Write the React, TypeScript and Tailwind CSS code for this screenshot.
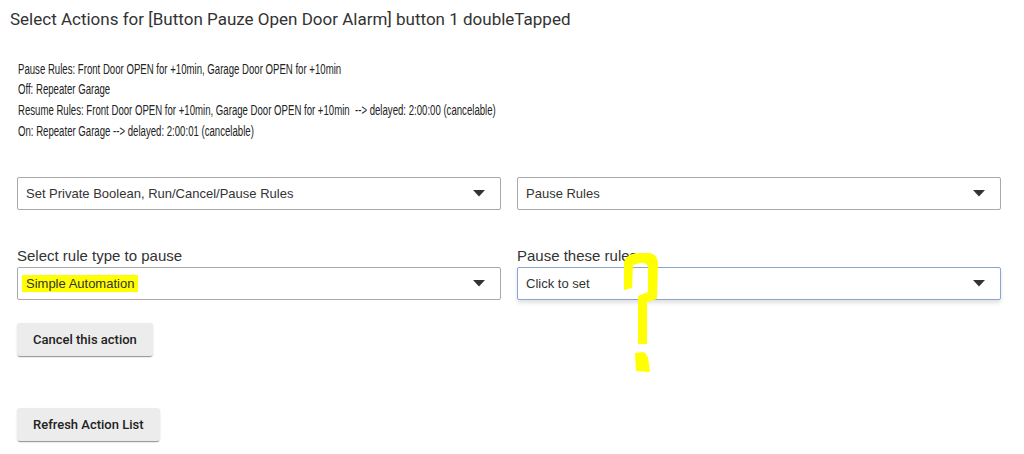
import React from 'react'

const roboto = { fontFamily: 'Roboto, "Liberation Sans", sans-serif' }
const arial = { fontFamily: '"Liberation Sans", Arial, sans-serif' }

function Caret() {
  return (
    <svg width="12" height="7" viewBox="0 0 12 7" className="shrink-0">
      <path d="M0 0h12L6 6.5z" fill="#333" />
    </svg>
  )
}

function Select({ children, focused }: { children: React.ReactNode; focused?: boolean }) {
  return (
    <div
      className={
        'flex h-[33px] items-center justify-between rounded-[2px] border bg-white pl-[8px] pr-[15px] text-[13px] text-[#333] ' +
        (focused ? 'border-[#8aa4d6] shadow-[0_3px_4px_rgba(0,0,0,0.12)]' : 'border-[#a9a9a9]')
      }
      style={arial}
    >
      <span>{children}</span>
      <Caret />
    </div>
  )
}

function Button({ label }: { label: string }) {
  return (
    <button
      className="h-[33px] rounded-[3px] bg-[#ececec] px-[16px] text-[13px] font-medium text-[#222] shadow-[0_2px_1px_-1px_rgba(0,0,0,0.35),0_1px_2px_rgba(0,0,0,0.15)]"
      style={roboto}
    >
      {label}
    </button>
  )
}

export default function App() {
  return (
    <div className="relative h-[454px] w-[1024px] overflow-hidden bg-white">
      <div className="pl-[10px] pt-[7px] text-[17px] text-[#333]" style={roboto}>
        Select Actions for [Button Pauze Open Door Alarm] button 1 doubleTapped
      </div>

      {/* the summary text is squeezed sideways in the original */}
      <div
        className="w-[1000px] origin-left scale-x-[0.62] pl-[29px] pt-[26px] text-[15.5px] leading-[20.7px] text-[#222]"
        style={arial}
      >
        <div>Pause Rules: Front Door OPEN for +10min, Garage Door OPEN for +10min</div>
        <div>Off: Repeater Garage</div>
        <div className="whitespace-pre">
          Resume Rules: Front Door OPEN for +10min, Garage Door OPEN for +10min  --&gt; delayed: 2:00:00 (cancelable)
        </div>
        <div>On: Repeater Garage --&gt; delayed: 2:00:01 (cancelable)</div>
      </div>

      <div className="grid grid-cols-[484px_484px] gap-x-[16px] pl-[17px] pt-[36px]">
        <Select>Set Private Boolean, Run/Cancel/Pause Rules</Select>
        <Select>Pause Rules</Select>
      </div>

      <div className="grid grid-cols-[484px_484px] gap-x-[16px] pl-[17px] pt-[36px]">
        <div>
          <div className="mb-[2px] text-[15px] leading-[19px] text-[#333]" style={arial}>
            Select rule type to pause
          </div>
          <Select>
            <span className="-ml-[4px] bg-[#ffff00] px-[4px] py-[1px]">Simple Automation</span>
          </Select>
        </div>
        <div>
          <div className="mb-[2px] text-[15px] leading-[19px] text-[#333]" style={arial}>
            Pause these rules
          </div>
          <Select focused>Click to set</Select>
        </div>
      </div>

      <div className="pl-[17px] pt-[23px]">
        <Button label="Cancel this action" />
      </div>
      <div className="pl-[17px] pt-[52px]">
        <Button label="Refresh Action List" />
      </div>

      {/* hand-drawn question mark annotation */}
      <svg
        className="pointer-events-none absolute left-[618px] top-[250px]"
        width="50"
        height="125"
        viewBox="0 0 50 125"
      >
        <path
          d="M6 40 L6 12 Q8 4 20 3 L32 3 Q40 5 40 14 L39 49 L29 52 L29 94 L20 94 L20 46 L30 42 L30 17 Q28 12 22 13 L15 15 L14 38 Z"
          fill="#ffff00"
        />
        <path d="M17 103 L26 102 L30 107 L32 122 L18 121 Z" fill="#ffff00" />
      </svg>
    </div>
  )
}
